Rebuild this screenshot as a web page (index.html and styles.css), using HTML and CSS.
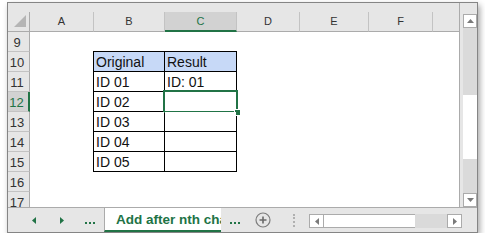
FILE: index.html
```html
<!DOCTYPE html>
<html>
<head>
    <title>Add after nth character</title>
    <meta charset="UTF-8">
    <link rel="stylesheet" href="styles.css">
</head>
<body>

<div class="window">
    <div class="sheet">
        <div class="colheads">
            <div class="corner">
                <svg width="21" height="19" viewBox="0 0 21 19"><polygon points="6,15 18,15 18,3" fill="#b5b5b5"/></svg>
            </div>
            <div class="ch col-a">A</div>
            <div class="ch col-b">B</div>
            <div class="ch col-c active">C</div>
            <div class="ch col-d">D</div>
            <div class="ch col-e">E</div>
            <div class="ch col-f">F</div>
            <div class="ch col-g"></div>
        </div>
        <div class="body">
            <div class="rowheads">
                <div class="rh">9</div>
                <div class="rh">10</div>
                <div class="rh">11</div>
                <div class="rh active">12</div>
                <div class="rh">13</div>
                <div class="rh">14</div>
                <div class="rh">15</div>
                <div class="rh">16</div>
                <div class="rh">17</div>
            </div>
            <div class="cells">
                <div class="data">
                    <div class="cell head">Original</div>
                    <div class="cell head">Result</div>
                    <div class="cell">ID 01</div>
                    <div class="cell">ID: 01</div>
                    <div class="cell">ID 02</div>
                    <div class="cell selected"><div class="sel"><div class="handle"></div></div></div>
                    <div class="cell">ID 03</div>
                    <div class="cell"></div>
                    <div class="cell">ID 04</div>
                    <div class="cell"></div>
                    <div class="cell">ID 05</div>
                    <div class="cell"></div>
                </div>
            </div>
        </div>
    </div>

    <div class="vscroll">
        <div class="sbtn">
            <svg width="7" height="4" viewBox="0 0 7 4"><polygon points="0,4 7,4 3.5,0" fill="#7a7a7a"/></svg>
        </div>
        <div class="vtrack">
            <div class="vthumb"></div>
        </div>
        <div class="sbtn">
            <svg width="7" height="4" viewBox="0 0 7 4"><polygon points="0,0 7,0 3.5,4" fill="#7a7a7a"/></svg>
        </div>
    </div>

    <div class="tabbar">
        <div class="nav">
            <svg class="arrow" width="4" height="7" viewBox="0 0 4 7"><polygon points="4,0 4,7 0,3.5" fill="#217346"/></svg>
            <svg class="arrow" width="4" height="7" viewBox="0 0 4 7"><polygon points="0,0 0,7 4,3.5" fill="#217346"/></svg>
            <span class="dots"><i></i><i></i><i></i></span>
        </div>
        <div class="tab"><span>Add after nth character</span></div>
        <div class="more"><span class="dots"><i></i><i></i><i></i></span></div>
        <svg class="plus" width="16" height="16" viewBox="0 0 16 16">
            <circle cx="8" cy="8" r="7" fill="none" stroke="#7d7d7d" stroke-width="1.2"/>
            <path d="M8 4.5v7M4.5 8h7" stroke="#6a6a6a" stroke-width="1.6"/>
        </svg>
        <div class="grip"></div>
        <div class="hscroll">
            <div class="sbtn">
                <svg width="4" height="7" viewBox="0 0 4 7"><polygon points="4,0 4,7 0,3.5" fill="#7a7a7a"/></svg>
            </div>
            <div class="hthumb"></div>
            <div class="htrack"></div>
            <div class="sbtn">
                <svg width="4" height="7" viewBox="0 0 4 7"><polygon points="0,0 0,7 4,3.5" fill="#7a7a7a"/></svg>
            </div>
        </div>
    </div>
</div>

</body>
</html>
```

FILE: styles.css
```css
body{
    margin: 0;
    background-color: #ffffff;
    font-family: "Liberation Sans", Arial, sans-serif;
}

.window{
    display: grid;
    grid-template-columns: 452px 17px;
    grid-template-rows: 204px 25px;
    width: 471px;
    height: 231px;
    box-sizing: border-box;
    margin: 2px 0 0 7px;
    border: 1px solid #858585;
    background-color: #e6e6e6;
    box-shadow: 2px 3px 6px rgba(0, 0, 0, 0.35);
}

/* sheet */

.sheet{
    border-right: 1px solid #ababab;
    overflow: hidden;
}

.colheads{
    display: flex;
    align-items: flex-end;
    height: 29px;
}

.corner,
.ch{
    height: 20px;
    box-sizing: border-box;
    border-right: 1px solid #c3c3c3;
    border-bottom: 1px solid #ababab;
}

.corner{
    width: 22px;
    border-right-color: #ababab;
}

.corner svg{
    display: block;
}

.ch{
    font-size: 11px;
    line-height: 19px;
    text-align: center;
    color: #333333;
}

.col-a{ width: 64px; }
.col-b{ width: 71px; }
.col-c{ width: 72px; }
.col-d{ width: 63px; }
.col-e{ width: 69px; }
.col-f{ width: 64px; }
.col-g{ width: 26px; border-right: none; }

.ch.active{
    background-color: #d2d2d2;
    color: #217346;
    border-bottom: 2px solid #217346;
}

.body{
    display: flex;
    height: 175px;
    overflow: hidden;
}

.rowheads{
    width: 22px;
    flex-shrink: 0;
}

.rh{
    height: 20px;
    box-sizing: border-box;
    padding: 2px 3px 0 0;
    border-right: 1px solid #ababab;
    border-bottom: 1px solid #c3c3c3;
    font-size: 13px;
    line-height: 17px;
    text-align: center;
    color: #333333;
}

.rh.active{
    background-color: #d2d2d2;
    color: #217346;
    border-right: 2px solid #217346;
}

.cells{
    flex: 1;
    background-color: #ffffff;
    padding: 19px 0 0 63px;
}

.data{
    display: grid;
    grid-template-columns: 70px 71px;
    grid-auto-rows: 19px;
    gap: 1px;
    width: max-content;
    border: 1px solid #000000;
    background-color: #000000;
}

.cell{
    position: relative;
    background-color: #ffffff;
    padding: 1px 0 0 2px;
    font-size: 14px;
    line-height: 18px;
    color: #111111;
    white-space: nowrap;
}

.cell.head{
    background-color: #c7d9f7;
}

.sel{
    position: absolute;
    top: -2px;
    left: -2px;
    right: -2px;
    bottom: -2px;
    border: 2px solid #217346;
}

.handle{
    position: absolute;
    right: -5px;
    bottom: -5px;
    width: 5px;
    height: 5px;
    background-color: #217346;
    border: 1px solid #ffffff;
}

/* scrollbars */

.vscroll{
    display: flex;
    flex-direction: column;
    padding: 11px 0 0 3px;
}

.sbtn{
    display: flex;
    align-items: center;
    justify-content: center;
    width: 14px;
    height: 14px;
    box-sizing: border-box;
    border: 1px solid #ababab;
    background-color: #ffffff;
    flex-shrink: 0;
}

.vtrack{
    flex: 1;
    padding-top: 67px;
    background-color: #dadada;
}

.vthumb{
    height: 64px;
    background-color: #ffffff;
}

.tabbar{
    grid-column: 1 / 3;
    display: flex;
    align-items: center;
    border-top: 1px solid #ababab;
    overflow: hidden;
}

.nav{
    display: flex;
    align-items: center;
    width: 96px;
    flex-shrink: 0;
    padding-left: 24px;
    box-sizing: border-box;
}

.arrow + .arrow{
    margin-left: 24px;
}

.dots{
    display: flex;
    gap: 2px;
    padding-top: 6px;
}

.dots i{
    width: 2px;
    height: 2px;
    background-color: #217346;
}

.nav .dots{
    margin-left: 21px;
}

.tab{
    width: 117px;
    height: 25px;
    flex-shrink: 0;
    box-sizing: border-box;
    margin-top: -1px;
    padding: 5px 0 0 11px;
    border-left: 1px solid #ababab;
    border-bottom: 2px solid #217346;
    background-color: #ffffff;
    overflow: hidden;
    white-space: nowrap;
    font-size: 13.5px;
    font-weight: bold;
    color: #217346;
}

.more{
    width: 27px;
    flex-shrink: 0;
    padding-left: 9px;
    box-sizing: border-box;
}

.plus{
    margin-left: 7px;
    flex-shrink: 0;
}

.grip{
    width: 0;
    height: 13px;
    margin-left: 22px;
    border-left: 2px dotted #b0b0b0;
}

.hscroll{
    display: flex;
    margin-left: 14px;
    margin-top: 2px;
}

.hscroll .sbtn{
    width: 15px;
}

.hthumb{
    width: 91px;
    height: 14px;
    box-sizing: border-box;
    border-top: 1px solid #ababab;
    border-bottom: 1px solid #ababab;
    background-color: #ffffff;
}

.htrack{
    width: 32px;
    height: 14px;
    background-color: #dadada;
}
```
